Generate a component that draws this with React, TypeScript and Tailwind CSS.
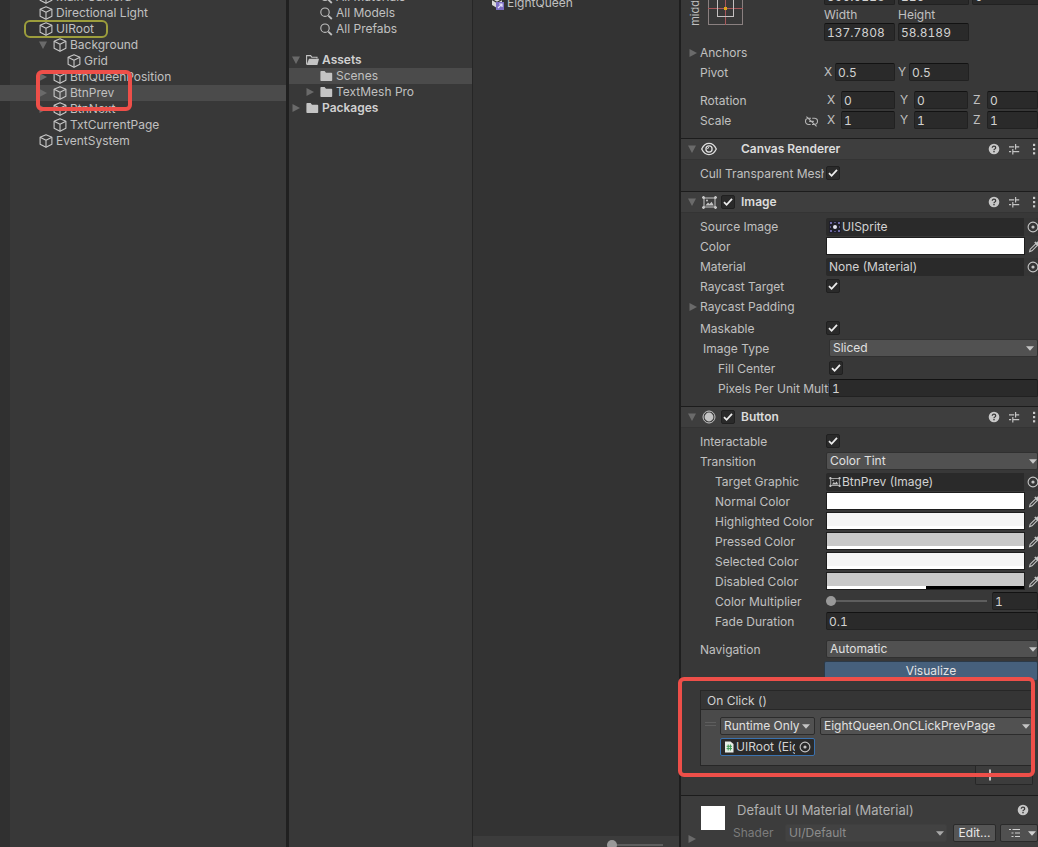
import React from "react";

type ArrowDir = "down" | "right";

function Arrow({ dir, className = "text-[#6a6a6a]" }: { dir: ArrowDir; className?: string }) {
  return (
    <svg viewBox="0 0 8 8" className={`size-2 shrink-0 ${className}`} fill="currentColor" aria-hidden="true">
      {dir === "down" ? <path d="M0 0.5h8L4 8z" /> : <path d="M0.5 0v8L8 4z" />}
    </svg>
  );
}

function CubeIcon() {
  return (
    <svg viewBox="0 0 14 14" className="size-[14px] shrink-0" fill="none" stroke="#c8c8c8" strokeWidth="1.1" strokeLinejoin="round" aria-hidden="true">
      <path d="M7 0.8 12.9 3.2V10.2L7 13.3 1.1 10.2V3.2Z" />
      <path d="M1.1 3.2 7 6.2 12.9 3.2M7 6.2V13.3" />
    </svg>
  );
}

function SearchIcon() {
  return (
    <svg viewBox="0 0 13 13" className="size-[13px] shrink-0" fill="none" stroke="#c0c0c0" aria-hidden="true">
      <circle cx="5" cy="5.2" r="4.2" strokeWidth="1.1" />
      <path d="M8.3 8.6 11.8 12" strokeWidth="1.8" />
    </svg>
  );
}

function FolderIcon({ open = false }: { open?: boolean }) {
  return (
    <svg viewBox="0 0 13 12" className="h-3 w-[13px] shrink-0" fill="#c4c4c4" aria-hidden="true">
      {open ? (
        <>
          <path d="M0.6 10.5V1.6H4.6L5.8 3.2H11V4.6" fill="none" stroke="#c4c4c4" strokeWidth="1.1" />
          <path d="M3 4.8H13L11.4 11H0.6Z" />
        </>
      ) : (
        <path d="M0.4 1.8Q0.4 1 1.2 1H4.6L6 2.8H11.4Q12.2 2.8 12.2 3.6V10.2Q12.2 11 11.4 11H1.2Q0.4 11 0.4 10.2Z" />
      )}
    </svg>
  );
}

function TargetIcon() {
  return (
    <svg viewBox="0 0 12 12" className="size-3 shrink-0" fill="none" stroke="#c4c4c4" strokeWidth="1.1" aria-hidden="true">
      <circle cx="6" cy="6" r="4.9" />
      <circle cx="6" cy="6" r="1.6" fill="#c4c4c4" stroke="none" />
    </svg>
  );
}

function DropperIcon() {
  return (
    <svg viewBox="0 0 14 14" className="size-[14px] shrink-0" aria-hidden="true">
      <path d="M8 4.6 9.6 6.2 4 11.8 1.6 12.6 2.2 10.2Z" fill="none" stroke="#c4c4c4" strokeWidth="1.1" />
      <path d="M6.2 3.6 7.6 2.6 8.8 3.4 10.6 1.2Q12.2 0.2 13.2 1.4 14 2.6 12.8 3.8L10.6 5.4 11.4 6.6 10.2 7.8Z" fill="#c4c4c4" />
    </svg>
  );
}

function EyeIcon() {
  return (
    <svg viewBox="0 0 16 14" className="h-[14px] w-4" fill="none" stroke="#dedede" aria-hidden="true">
      <path d="M0.7 7Q3.4 1.4 8 1.4T15.3 7Q12.6 12.6 8 12.6T0.7 7Z" strokeWidth="1.3" />
      <circle cx="8" cy="7" r="3.1" strokeWidth="1.3" />
      <path d="M8 5.4A1.6 1.6 0 0 0 6.6 7" strokeWidth="1" />
    </svg>
  );
}

function ImageIcon({ className = "h-[13px] w-[15px]" }: { className?: string }) {
  return (
    <svg viewBox="0 0 15 13" className={`shrink-0 ${className}`} fill="none" stroke="#c4c4c4" aria-hidden="true">
      <rect x="2" y="2" width="11" height="9" strokeWidth="1" />
      <path d="M0 1.5H3M1.5 0V3M12 1.5H15M13.5 0V3M0 11.5H3M1.5 10V13M12 11.5H15M13.5 10V13" strokeWidth="1.4" />
      <path d="M3.4 9.6 6 6.6 7.6 8 9.6 5.8 11.8 9.6Z" fill="#c4c4c4" stroke="none" />
      <circle cx="5" cy="4.6" r="1" fill="#c4c4c4" stroke="none" />
    </svg>
  );
}

function ButtonIcon() {
  return (
    <svg viewBox="0 0 14 14" className="size-[14px]" aria-hidden="true">
      <circle cx="7" cy="7" r="6" fill="none" stroke="#c4c4c4" strokeWidth="1" />
      <circle cx="7" cy="7" r="4.4" fill="#c4c4c4" />
    </svg>
  );
}

function HelpIcon() {
  return (
    <svg viewBox="0 0 12 12" className="size-3" aria-hidden="true">
      <circle cx="6" cy="6" r="5.3" fill="#c8c8c8" />
      <path d="M4.3 4.8Q4.3 3.2 6 3.2T7.7 4.7Q7.7 5.5 6.8 6 6 6.4 6 7.2" fill="none" stroke="#3a3a3a" strokeWidth="1.3" />
      <rect x="5.3" y="8" width="1.4" height="1.3" fill="#3a3a3a" />
    </svg>
  );
}

function PresetIcon() {
  return (
    <svg viewBox="0 0 12 12" className="size-3" fill="none" stroke="#c4c4c4" strokeWidth="1.2" aria-hidden="true">
      <path d="M1 3.8H6.2M7.6 3.8H11.2M7.6 1V6.6M1 8.6H3.2M4.8 8.6H11.2M4.8 6V11.4" />
    </svg>
  );
}

function DotsIcon() {
  return (
    <svg viewBox="0 0 4 12" className="h-3 w-1" fill="#c8c8c8" aria-hidden="true">
      <rect x="1" y="0.8" width="2.2" height="2.2" />
      <rect x="1" y="5" width="2.2" height="2.2" />
      <rect x="1" y="9.2" width="2.2" height="2.2" />
    </svg>
  );
}

function UnlinkIcon() {
  return (
    <svg viewBox="0 0 13 11" className="h-[11px] w-[13px]" fill="none" stroke="#b4b4b4" strokeWidth="1.1" aria-hidden="true">
      <path d="M6 2.3H3.6A3.1 3.1 0 0 0 3.6 8.5H5.6M7.2 2.3H9.4A3.1 3.1 0 0 1 9.4 8.5H7M4.2 5.4H8.8M1.4 0.6 11.6 10.4" />
    </svg>
  );
}

function AnchorWidget() {
  return (
    <svg viewBox="0 0 36 36" className="size-9 shrink-0" fill="none" aria-label="Anchor preset" role="img">
      <rect x="0.5" y="0.5" width="34" height="34" stroke="#8a8080" />
      <path d="M0 18.5H35M17.5 0V35" stroke="#a8585a" />
      <rect x="9.5" y="9.5" width="16" height="17" stroke="#c4c0c0" />
      <rect x="16" y="17" width="3" height="3" fill="#e0a818" />
    </svg>
  );
}

type Kind = "cube" | "search" | "folder" | "folderOpen";
interface Node {
  name: string;
  depth: 0 | 1 | 2;
  kind: Kind;
  arrow?: ArrowDir;
  selected?: boolean;
  bold?: boolean;
  marked?: boolean;
}

const hierarchy: Node[] = [
  { name: "Main Camera", depth: 0, kind: "cube" },
  { name: "Directional Light", depth: 0, kind: "cube" },
  { name: "UIRoot", depth: 0, kind: "cube", marked: true },
  { name: "Background", depth: 1, kind: "cube", arrow: "down" },
  { name: "Grid", depth: 2, kind: "cube" },
  { name: "BtnQueenPosition", depth: 1, kind: "cube", arrow: "right" },
  { name: "BtnPrev", depth: 1, kind: "cube", arrow: "right", selected: true },
  { name: "BtnNext", depth: 1, kind: "cube", arrow: "right" },
  { name: "TxtCurrentPage", depth: 1, kind: "cube" },
  { name: "EventSystem", depth: 0, kind: "cube" },
];

const favorites: Node[] = [
  { name: "All Materials", depth: 1, kind: "search" },
  { name: "All Models", depth: 1, kind: "search" },
  { name: "All Prefabs", depth: 1, kind: "search" },
];

const folders: Node[] = [
  { name: "Assets", depth: 0, kind: "folderOpen", arrow: "down", bold: true },
  { name: "Scenes", depth: 1, kind: "folder", selected: true },
  { name: "TextMesh Pro", depth: 1, kind: "folder", arrow: "right" },
  { name: "Packages", depth: 0, kind: "folder", arrow: "right", bold: true },
];

const indents = ["pl-0", "pl-[14px]", "pl-[28px]"];

function NodeIcon({ kind }: { kind: Kind }) {
  if (kind === "cube") return <CubeIcon />;
  if (kind === "search") return <SearchIcon />;
  return <FolderIcon open={kind === "folderOpen"} />;
}

function Tree({ nodes, base = "", className = "" }: { nodes: Node[]; base?: string; className?: string }) {
  return (
    <ul className={className}>
      {nodes.map((n) => (
        <li key={n.name} className={`h-4 ${base} ${n.selected ? "bg-[#4b4b4b]" : ""}`}>
          <button type="button" className={`relative flex h-4 items-center gap-[3px] whitespace-nowrap ${indents[n.depth]} ${n.bold ? "font-semibold text-[#d0d0d0]" : ""}`}>
            {n.marked && (
              <span className="absolute -inset-y-px -right-[14px] left-[2px] rounded-md border-2 border-[#9c9d3c] bg-[#333333]" />
            )}
            <span className="flex w-[14px] justify-center">{n.arrow && <Arrow dir={n.arrow} />}</span>
            <span className="relative flex">
              <NodeIcon kind={n.kind} />
            </span>
            <span className="relative">{n.name}</span>
          </button>
        </li>
      ))}
    </ul>
  );
}

function Check({ id, label }: { id: string; label?: string }) {
  return (
    <span className="grid size-[14px] shrink-0 place-items-center">
      <input
        id={id}
        type="checkbox"
        defaultChecked
        aria-label={label}
        className="peer col-start-1 row-start-1 size-[14px] appearance-none rounded-xs border border-[#202020] bg-[#2a2a2a]"
      />
      <svg viewBox="0 0 12 12" className="pointer-events-none invisible col-start-1 row-start-1 size-3 peer-checked:visible" fill="none" stroke="#ececec" strokeWidth="1.8" aria-hidden="true">
        <path d="M2 6.2 4.6 8.8 10 2.8" />
      </svg>
    </span>
  );
}

function TextField({ id, value, label, className = "flex-1" }: { id?: string; value: string; label?: string; className?: string }) {
  return (
    <input
      id={id}
      type="text"
      aria-label={label}
      defaultValue={value}
      className={`h-[18px] min-w-0 rounded-xs border border-[#212121] border-t-[#121212] bg-[#2a2a2a] pl-[2px] text-[#d2d2d2] tabular-nums outline-none ${className}`}
    />
  );
}

function Dropdown({
  id,
  value,
  label,
  className = "",
  arrowInset = "mr-px",
  tone = "bg-[#515151] border-[#303030] text-[#e0e0e0]",
}: {
  id?: string;
  value: string;
  label?: string;
  className?: string;
  arrowInset?: string;
  tone?: string;
}) {
  return (
    <span className={`grid min-w-0 items-center ${className}`}>
      <select id={id} aria-label={label} defaultValue={value} className={`col-start-1 row-start-1 h-[18px] w-full appearance-none rounded-xs border pl-[3px] leading-4 outline-none ${tone}`}>
        <option>{value}</option>
      </select>
      <svg viewBox="0 0 8 5" className={`pointer-events-none col-start-1 row-start-1 h-[5px] w-2 justify-self-end ${arrowInset}`} fill="#c4c4c4" aria-hidden="true">
        <path d="M0 0.3H8L4 4.8Z" />
      </svg>
    </span>
  );
}

function Row({
  label,
  htmlFor,
  indent = "pl-[19px]",
  slot = "w-[145px]",
  arrow,
  children,
}: {
  label: string;
  htmlFor?: string;
  indent?: string;
  slot?: string;
  arrow?: boolean;
  children?: React.ReactNode;
}) {
  return (
    <div className="flex h-5">
      <div className={`flex shrink-0 items-center overflow-hidden whitespace-nowrap ${slot} ${arrow ? "pl-2" : indent}`}>
        {arrow && (
          <span className="mr-[3px] flex">
            <Arrow dir="right" />
          </span>
        )}
        {htmlFor ? <label htmlFor={htmlFor}>{label}</label> : <span>{label}</span>}
      </div>
      <div className="flex h-[18px] min-w-0 flex-1 items-center">{children}</div>
    </div>
  );
}

function ObjectField({ label, children }: { label: string; children: React.ReactNode }) {
  return (
    <button type="button" aria-label={label} className="mt-px flex h-[18px] min-w-0 flex-1 items-center justify-between overflow-hidden rounded-xs bg-[#2a2a2a] pl-[3px] text-[#d2d2d2]">
      <span className="flex items-center gap-px whitespace-nowrap">{children}</span>
      <span className="flex h-full w-[14px] items-center overflow-hidden bg-[#363636] pl-[3px]">
        <TargetIcon />
      </span>
    </button>
  );
}

function ColorField({ label, fill, alpha }: { label: string; fill: string; alpha: string }) {
  return (
    <div className="flex min-w-0 flex-1 items-center">
      <button type="button" aria-label={label} className="flex h-[18px] flex-1 flex-col border border-[#1e1e1e]">
        <span className={`w-full flex-1 ${fill}`} />
        <span className="flex h-[3px] w-full bg-black">
          <span className={`bg-white ${alpha}`} />
        </span>
      </button>
      <button type="button" aria-label={`Pick ${label}`} className="flex w-[13px] overflow-hidden pl-[3px]">
        <DropperIcon />
      </button>
    </div>
  );
}

function Header({ title, icon, checkId }: { title: string; icon: React.ReactNode; checkId?: string }) {
  return (
    <div className="flex h-[21px] items-center border-b border-[#343434] bg-[#3e3e3e] pl-[7px]">
      <Arrow dir="down" />
      <span className="ml-[5px] flex w-4 justify-center">{icon}</span>
      <span className="mr-[6px] ml-1 flex w-[14px]">{checkId && <Check id={checkId} label={`${title} enabled`} />}</span>
      <h2 className="flex-1 font-semibold text-[#dcdcdc]">{title}</h2>
      <div className="flex items-center gap-2">
        <button type="button" aria-label="Help"><HelpIcon /></button>
        <button type="button" aria-label="Presets"><PresetIcon /></button>
        <button type="button" aria-label="More" className="ml-1"><DotsIcon /></button>
      </div>
      <span className="w-[2px]" />
    </div>
  );
}

function Component({ title, icon, checkId, children }: { title: string; icon: React.ReactNode; checkId?: string; children: React.ReactNode }) {
  return (
    <section className="shrink-0 border-t border-[#1c1c1c]">
      <Header title={title} icon={icon} checkId={checkId} />
      <div className="pt-1 pb-[7px]">{children}</div>
    </section>
  );
}

function Axis({ name, value, field, className = "" }: { name: string; value: string; field: string; className?: string }) {
  return (
    <label className={`flex items-center ${className}`}>
      <span className={`shrink-0 ${field}`}>{name}</span>
      <TextField value={value} className="w-full" />
    </label>
  );
}

function RectTransform() {
  return (
    <section className="h-[138px] shrink-0">
      <div className="flex h-[43px] overflow-hidden">
        <div className="flex h-[26px] w-[143px] shrink-0 items-end gap-[5px] self-start pl-[7px]">
          <span className="rotate-180 text-[11px] leading-[15px] [writing-mode:vertical-rl]">middle</span>
          <AnchorWidget />
        </div>
        <div className="-mt-[13px] flex flex-1 flex-col">
          <div className="flex gap-[3px]">
            <TextField label="Pos X" value="590.0128" className="w-[71px]" />
            <TextField label="Pos Y" value="216" className="w-[71px]" />
            <TextField label="Pos Z" value="0" className="flex-1" />
          </div>
          <div className="flex h-[18px] items-end gap-[3px]">
            <label htmlFor="width" className="h-[18px] w-[71px] leading-5">Width</label>
            <label htmlFor="height" className="h-[18px] w-[71px] leading-5">Height</label>
          </div>
          <div className="flex items-center gap-[3px]">
            <TextField id="width" value="137.7808" className="w-[71px]" />
            <TextField id="height" value="58.8189" className="w-[71px]" />
            <div className="flex flex-1 justify-end gap-px">
              <button type="button" aria-label="Blueprint mode" className="flex h-[18px] w-6 items-center justify-center bg-[#555555]">
                <svg viewBox="0 0 12 12" className="size-3" fill="none" stroke="#b0b0b0" strokeDasharray="2 2" aria-hidden="true">
                  <rect x="1" y="1" width="10" height="10" />
                </svg>
              </button>
              <button type="button" aria-label="Raw edit mode" className="h-[18px] w-[22px] bg-[#555555] pl-[2px] text-[#9a9a9a]">R</button>
            </div>
          </div>
        </div>
      </div>
      <Row label="Anchors" arrow />
      <Row label="Pivot" slot="w-[143px]">
        <div className="flex gap-[3px]">
          <Axis name="X" value="0.5" field="w-[11px]" className="w-[71px]" />
          <Axis name="Y" value="0.5" field="w-[11px]" className="w-[71px]" />
        </div>
      </Row>
      <div className="h-2" />
      {["Rotation", "Scale"].map((name) => (
        <div key={name} className="flex h-5">
          <div className="flex w-[146px] shrink-0 items-center justify-between pr-[9px] pl-[19px]">
            <span>{name}</span>
            {name === "Scale" && <UnlinkIcon />}
          </div>
          <div className="flex h-[18px] flex-1 gap-[5px]">
            {["X", "Y", "Z"].map((axis) => (
              <Axis
                key={axis}
                name={axis}
                value={name === "Scale" ? "1" : "0"}
                field="w-[14px]"
                className={axis === "Z" ? "min-w-0 flex-1" : "w-[68px]"}
              />
            ))}
          </div>
        </div>
      ))}
    </section>
  );
}

function SpriteIcon() {
  return (
    <svg viewBox="0 0 12 12" className="size-3 shrink-0" aria-hidden="true">
      <rect width="12" height="12" fill="#1f1f2a" />
      <path d="M1 1h2v2H1zM9 1h2v2H9zM1 9h2v2H1zM9 9h2v2H9zM5.3 1h1.4v1H5.3zM5.3 10h1.4v1H5.3zM1 5.3h1v1.4H1zM10 5.3h1v1.4h-1z" fill="#6f6aa8" />
      <circle cx="6" cy="6" r="2" fill="#e4e4f0" />
    </svg>
  );
}

const buttonColors = [
  { label: "Normal Color", fill: "bg-white", alpha: "w-full" },
  { label: "Highlighted Color", fill: "bg-[#f5f5f5]", alpha: "w-full" },
  { label: "Pressed Color", fill: "bg-[#c8c8c8]", alpha: "w-full" },
  { label: "Selected Color", fill: "bg-[#f5f5f5]", alpha: "w-full" },
  { label: "Disabled Color", fill: "bg-[#c8c8c8]", alpha: "w-1/2" },
];

function OnClick() {
  return (
    <div className="mt-[9px] mr-[5px] mb-[3px] ml-[19px]">
      <h3 className="h-5 border border-[#272727] bg-[#353535] pl-[6px] leading-5 text-[#d0d0d0]">On Click ()</h3>
      <div className="flex h-14 gap-1 border-x border-b border-[#272727] bg-[#4a4a4a] pt-[7px] pl-1">
        <svg viewBox="0 0 11 18" className="h-[18px] w-[11px] shrink-0" stroke="#5e5e5e" aria-hidden="true">
          <path d="M0 5.5H11M0 8.5H11" />
        </svg>
        <div className="flex w-[95px] shrink-0 flex-col gap-[3px]">
          <Dropdown label="Call state" value="Runtime Only" arrowInset="mr-[5px]" tone="bg-[#515151] border-[#2c2c2c] text-[#e0e0e0]" />
          <button type="button" aria-label="Listener target" className="flex h-[18px] items-center gap-[2px] rounded-xs border border-[#3a72b0] bg-[#2a2a2a] pl-[3px] text-[#d2d2d2]">
            <svg viewBox="0 0 10 12" className="h-3 w-[10px] shrink-0" aria-hidden="true">
              <path d="M1 0.5H6.5L9.5 3V11.5H1Z" fill="#e8eee8" />
              <path d="M4.2 3.5V9.5M6.4 3.5V9.5M2.6 5.3H8M2.6 7.6H8" stroke="#3c9a54" strokeWidth="1" fill="none" />
            </svg>
            <span className="min-w-0 flex-1 overflow-hidden text-left whitespace-nowrap">UIRoot (EightQueen)</span>
            <span className="mr-[3px] flex pl-[2px]"><TargetIcon /></span>
          </button>
        </div>
        <Dropdown label="Callback" value="EightQueen.OnCLickPrevPage" className="ml-px flex-1 self-start" arrowInset="mr-[2px]" tone="bg-[#515151] border-[#2c2c2c] text-[#e0e0e0]" />
      </div>
      <div className="flex justify-end">
        <div className="flex h-[19px] w-[58px] justify-around rounded-b-xs border-x border-b border-[#272727] bg-[#3c3c3c]">
          <button type="button" aria-label="Add listener" className="flex size-[18px] items-center justify-center">
            <svg viewBox="0 0 12 12" className="size-3" stroke="#e4e4e4" strokeWidth="1.6" aria-hidden="true">
              <path d="M6 0.5V11.5M1.5 6H10.5" />
            </svg>
          </button>
          <button type="button" aria-label="Remove listener" className="flex size-[18px] items-center justify-center">
            <svg viewBox="0 0 12 12" className="size-3" stroke="#8a8a8a" aria-hidden="true">
              <path d="M2 6H10" />
            </svg>
          </button>
        </div>
      </div>
    </div>
  );
}

function MaterialFooter() {
  return (
    <section className="flex min-h-0 flex-1 border-t border-[#1c1c1c] bg-[#3c3c3c] text-[#a8a8a8]">
      <div className="flex w-5 shrink-0 pt-[39px] pl-[7px]">
        <Arrow dir="right" />
      </div>
      <div className="mt-[10px] size-6 shrink-0 bg-white" />
      <div className="min-w-0 flex-1 pt-1 pl-2">
        <div className="flex h-5 items-center justify-between pr-[9px] pl-1">
          <h2 className="text-[13px] text-[#b0b0b0]">Default UI Material (Material)</h2>
          <button type="button" aria-label="Help"><HelpIcon /></button>
        </div>
        <div className="mt-1 flex items-center">
          <label htmlFor="shader" className="w-[52px] text-[#7c7c7c]">Shader</label>
          <Dropdown id="shader" value="UI/Default" className="flex-1 opacity-80" arrowInset="mr-[3px]" tone="bg-[#444444] border-[#404040] text-[#a0a0a0]" />
          <button type="button" className="ml-[6px] h-[18px] w-[43px] rounded-xs border border-[#2a2a2a] bg-[#555555] leading-4 text-[#e8e8e8]">Edit...</button>
          <button type="button" aria-label="Shader options" className="ml-1 flex h-[18px] w-[38px] items-center justify-between rounded-xs border border-[#2a2a2a] bg-[#505050] pr-px pl-2">
            <svg viewBox="0 0 12 10" className="h-[10px] w-3" stroke="#d0d0d0" strokeWidth="1.2" aria-hidden="true">
              <path d="M0 1.5H2M3.5 1.5H11M2.5 5H4.5M6 5H11M2.5 8.5H4.5M6 8.5H11" />
            </svg>
            <svg viewBox="0 0 8 5" className="h-[5px] w-2" fill="#d0d0d0" aria-hidden="true">
              <path d="M0 0.3H8L4 4.8Z" />
            </svg>
          </button>
        </div>
      </div>
    </section>
  );
}

function Inspector() {
  return (
    <aside className="flex w-[359px] shrink-0 flex-col overflow-hidden border-l-2 border-[#1e1e1e] bg-[#383838]">
      <RectTransform />
      <Component title="Canvas Renderer" icon={<EyeIcon />}>
        <Row label="Cull Transparent Mesh" htmlFor="cull" slot="w-[143px]">
          <span className="ml-[2px] flex"><Check id="cull" /></span>
        </Row>
      </Component>
      <Component title="Image" icon={<ImageIcon />} checkId="image-on">
        <Row label="Source Image">
          <ObjectField label="Source Image">
            <SpriteIcon />
            <span>UISprite</span>
          </ObjectField>
        </Row>
        <Row label="Color">
          <ColorField label="Color" fill="bg-white" alpha="w-full" />
        </Row>
        <Row label="Material">
          <ObjectField label="Material">None (Material)</ObjectField>
        </Row>
        <Row label="Raycast Target" htmlFor="raycast">
          <Check id="raycast" />
        </Row>
        <Row label="Raycast Padding" arrow />
        <div className="h-[2px]" />
        <Row label="Maskable" htmlFor="maskable">
          <Check id="maskable" />
        </Row>
        <Row label="Image Type" htmlFor="image-type" indent="pl-[22px]" slot="w-[148px]">
          <Dropdown id="image-type" value="Sliced" className="flex-1" arrowInset="mr-1" />
        </Row>
        <Row label="Fill Center" htmlFor="fill-center" indent="pl-[37px]" slot="w-[148px]">
          <Check id="fill-center" />
        </Row>
        <Row label="Pixels Per Unit Multiplier" htmlFor="ppu" indent="pl-[37px]" slot="w-[148px]">
          <TextField id="ppu" value="1" />
        </Row>
      </Component>
      <Component title="Button" icon={<ButtonIcon />} checkId="button-on">
        <Row label="Interactable" htmlFor="interactable">
          <Check id="interactable" />
        </Row>
        <Row label="Transition" htmlFor="transition">
          <Dropdown id="transition" value="Color Tint" className="flex-1" />
        </Row>
        <Row label="Target Graphic" indent="pl-[34px]">
          <ObjectField label="Target Graphic">
            <ImageIcon className="h-[10px] w-3" />
            <span>BtnPrev (Image)</span>
          </ObjectField>
        </Row>
        {buttonColors.map((c) => (
          <Row key={c.label} label={c.label} indent="pl-[34px]">
            <ColorField {...c} />
          </Row>
        ))}
        <Row label="Color Multiplier" htmlFor="multiplier" indent="pl-[34px]">
          <input
            id="multiplier"
            type="range"
            min="1"
            max="5"
            defaultValue="1"
            className="h-[10px] min-w-0 flex-1 appearance-none bg-[linear-gradient(#5e5e5e,#5e5e5e)] bg-[length:100%_2px] bg-center bg-no-repeat [&::-webkit-slider-thumb]:size-[10px] [&::-webkit-slider-thumb]:appearance-none [&::-webkit-slider-thumb]:rounded-full [&::-webkit-slider-thumb]:bg-[#999999]"
          />
          <TextField label="Color Multiplier value" value="1" className="ml-[5px] w-[46px]" />
        </Row>
        <Row label="Fade Duration" htmlFor="fade" indent="pl-[34px]">
          <TextField id="fade" value="0.1" />
        </Row>
        <div className="h-2" />
        <Row label="Navigation" htmlFor="navigation">
          <Dropdown id="navigation" value="Automatic" className="flex-1" />
        </Row>
        <button type="button" className="mt-px ml-[143px] block h-5 w-[214px] rounded-xs border border-[#2c3a48] bg-[#46607c] leading-[18px] text-[#e4e4e4]">
          Visualize
        </button>
        <OnClick />
      </Component>
      <MaterialFooter />
    </aside>
  );
}

function AssetsPane() {
  return (
    <section className="flex min-w-0 flex-1 flex-col overflow-hidden border-l border-[#262626] bg-[#333333]">
      <button type="button" className="-mt-[5px] flex h-4 items-center gap-[3px] pl-[18px]">
        <svg viewBox="0 0 13 13" className="size-[13px] shrink-0" aria-hidden="true">
          <path d="M6 0 11 2.5V8L6 11 1 8V2.5Z" fill="#d8d8d8" />
          <path d="M6 5.5V11M6 5.5 1 2.5M6 5.5 11 2.5" stroke="#333333" strokeWidth="1.3" />
          <rect x="5" y="5" width="8" height="8" fill="#7d6fc4" />
          <path d="M7 11 11 7M8 7H11V10" fill="none" stroke="#e4e0f8" strokeWidth="1.2" />
        </svg>
        <span>EightQueen</span>
      </button>
      <div className="flex-1" />
      <footer className="h-[11px] shrink-0 overflow-hidden bg-[#3c3c3c] pt-1 pr-4">
        <input
          type="range"
          aria-label="Icon size"
          defaultValue="0"
          className="ml-auto block h-[10px] w-14 appearance-none bg-[linear-gradient(#5e5e5e,#5e5e5e)] bg-[length:100%_2px] bg-center bg-no-repeat [&::-webkit-slider-thumb]:size-[10px] [&::-webkit-slider-thumb]:appearance-none [&::-webkit-slider-thumb]:rounded-full [&::-webkit-slider-thumb]:bg-[#999999]"
        />
      </footer>
    </section>
  );
}

export default function App() {
  return (
    <main className="relative flex h-screen overflow-hidden bg-[#383838] font-['Inter','Liberation_Sans',sans-serif] text-[12px] leading-4 text-[#c0c0c0]">
      <nav aria-label="Hierarchy" className="w-[286px] shrink-0 bg-[linear-gradient(90deg,#303030_10px,#383838_10px)]">
        <Tree nodes={hierarchy} base="pl-[22px]" className="-mt-[11px]" />
      </nav>
      <nav aria-label="Project" className="w-[186px] shrink-0 border-l-3 border-[#202020]">
        <Tree nodes={favorites} className="-mt-[11px]" />
        <Tree nodes={folders} className="mt-[15px]" />
      </nav>
      <AssetsPane />
      <Inspector />
      <div className="pointer-events-none absolute top-[70px] left-9 h-[41px] w-24 rounded-md border-4 border-[#ee4f49]" />
      <div className="pointer-events-none absolute top-[677px] right-[3px] h-[100px] w-[357px] rounded-md border-4 border-[#ee4f49]" />
    </main>
  );
}
